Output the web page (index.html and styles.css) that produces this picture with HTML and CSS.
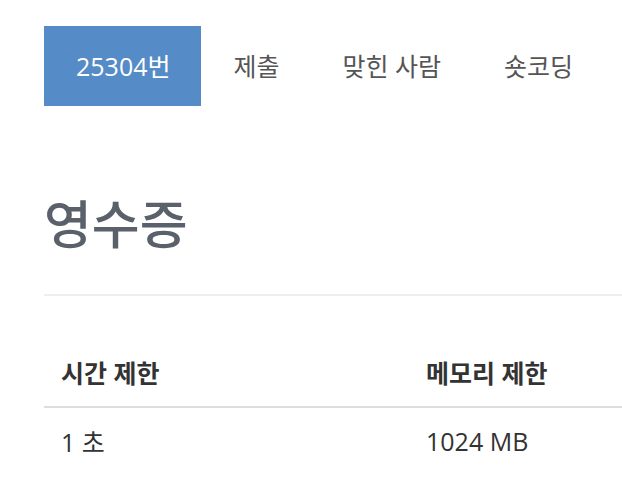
FILE: index.html
```html
<html>
 <head>
  <title>25304번: 영수증</title>
  <meta charset="utf-8">
  <link rel="stylesheet" href="styles.css">
 </head>
 <body>
  <div class="wrapper">
   <ul class="nav-tabs">
    <li class="active"><a href="#">25304번</a></li>
    <li><a href="#">제출</a></li>
    <li><a href="#">맞힌 사람</a></li>
    <li><a href="#">숏코딩</a></li>
   </ul>

   <div class="page-header">
    <h1 id="problem_title">영수증</h1>
   </div>

   <table class="problem-info">
    <thead>
     <tr>
      <th class="col-time">시간 제한</th>
      <th>메모리 제한</th>
     </tr>
    </thead>
    <tbody>
     <tr>
      <td>1 초</td>
      <td>1024 MB</td>
     </tr>
    </tbody>
   </table>
  </div>
 </body>
</html>
```

FILE: styles.css
```css
body{
    margin:0;
    font-family:"Open Sans","Noto Sans CJK KR",sans-serif;
    color:#333;
    background:#fff;
}

.wrapper{
    padding-top:26px;
    padding-left:44px;
}

/* tabs */
.nav-tabs{
    display:flex;
    list-style:none;
    margin:0;
    padding:0;
}
.nav-tabs li a{
    display:block;
    height:80px;
    line-height:80px;
    padding:0 31px 0 32px;
    font-size:25px;
    color:#555;
    text-decoration:none;
}
.nav-tabs li.active a{
    background-color:#558bc7;
    color:#fff;
}

/* title */
.page-header{
    margin-top:88px;
    padding-bottom:40px;
    border-bottom:2px solid #eee;
}
.page-header h1{
    margin:0;
    font-size:52px;
    font-weight:500;
    line-height:60px;
    color:#5a616b;
}

/* limits table */
.problem-info{
    width:100%;
    border-collapse:collapse;
    font-size:25px;
}
.problem-info th,
.problem-info td{
    text-align:left;
    padding:15px 17px;
}
.problem-info th{
    font-weight:bold;
    padding-top:58px;
    padding-bottom:16px;
    border-bottom:2px solid #ddd;
}
.problem-info .col-time{
    width:331px;
}
```
